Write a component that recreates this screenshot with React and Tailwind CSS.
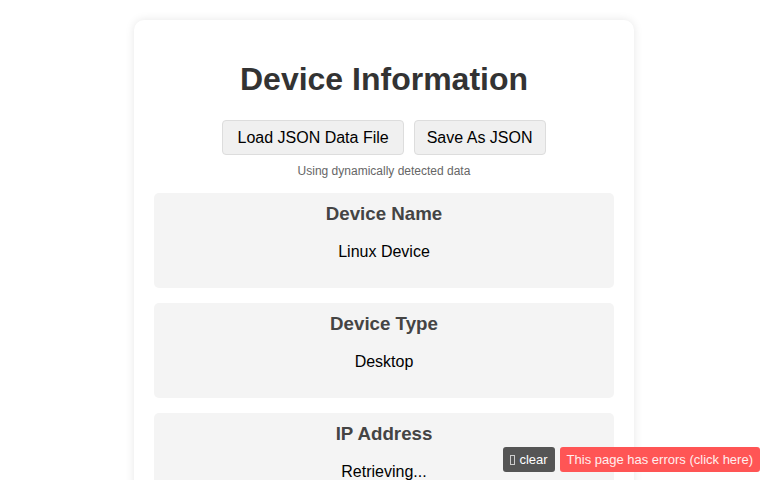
export default function App() {
  const sections = [
    { title: 'Device Name', value: 'Linux Device' },
    { title: 'Device Type', value: 'Desktop' },
    { title: 'IP Address', value: 'Retrieving...' },
  ];

  return (
    <div className="min-h-screen bg-white pt-[20px] font-['Liberation_Sans',Arial,sans-serif]">
      <div className="mx-auto w-[500px] rounded-[10px] bg-white p-5 shadow-[0_0_10px_rgba(0,0,0,0.1)]">
        <h1 className="mt-[21px] mb-[22px] text-center text-[32px] font-bold leading-[37px] text-[#333]">
          Device Information
        </h1>
        <div className="flex justify-center gap-[10px]">
          <button className="h-[35px] rounded-[4px] border border-[#ddd] bg-[#f0f0f0] px-[14px] text-[16px] text-black">
            Load JSON Data File
          </button>
          <button className="h-[35px] rounded-[4px] border border-[#ddd] bg-[#f0f0f0] px-[12px] text-[16px] text-black">
            Save As JSON
          </button>
        </div>
        <p className="mt-[9px] text-center text-[12px] leading-[14px] text-[#666]">
          Using dynamically detected data
        </p>
        <div className="mt-[15px] flex flex-col gap-[15px]">
          {sections.map((s) => (
            <div key={s.title} className="rounded-[5px] bg-[#f4f4f4] p-[10px] text-center">
              <h3 className="text-[18.72px] font-bold leading-[22px] text-[#444]">{s.title}</h3>
              <p className="mt-[18px] mb-[17px] text-[16px] leading-[18px] text-black">{s.value}</p>
            </div>
          ))}
        </div>
      </div>

      {/* error overlay */}
      <div className="fixed bottom-[8px] right-[8px] flex gap-[5px] text-[13px]">
        <button className="flex h-[25px] items-center gap-[4px] rounded-[3px] bg-[#555] px-[7px] text-white">
          <span className="inline-block h-[10px] w-[5px] border border-[#ccc]" />
          clear
        </button>
        <button className="h-[25px] rounded-[3px] bg-[#f55] px-[7px] text-[#fee]">
          This page has errors (click here)
        </button>
      </div>
    </div>
  );
}
